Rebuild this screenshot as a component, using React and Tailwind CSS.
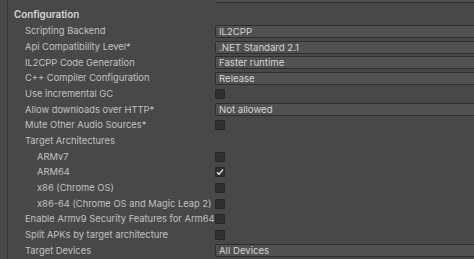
import React from 'react'

const rows = [
  { label: 'Scripting Backend', type: 'select', value: 'IL2CPP' },
  { label: 'Api Compatibility Level*', type: 'select', value: '.NET Standard 2.1' },
  { label: 'IL2CPP Code Generation', type: 'select', value: 'Faster runtime' },
  { label: 'C++ Compiler Configuration', type: 'select', value: 'Release' },
  { label: 'Use incremental GC', type: 'check', value: false },
  { label: 'Allow downloads over HTTP*', type: 'select', value: 'Not allowed' },
  { label: 'Mute Other Audio Sources*', type: 'check', value: false },
  { label: 'Target Architectures', type: 'none' },
  { label: 'ARMv7', type: 'check', value: false, sub: true },
  { label: 'ARM64', type: 'check', value: true, sub: true },
  { label: 'x86 (Chrome OS)', type: 'check', value: false, sub: true },
  { label: 'x86-64 (Chrome OS and Magic Leap 2)', type: 'check', value: false, sub: true },
  { label: 'Enable Armv9 Security Features for Arm64', type: 'check', value: false },
  { label: 'Split APKs by target architecture', type: 'check', value: false },
  { label: 'Target Devices', type: 'select', value: 'All Devices' }
]

function Field({ row }) {
  if (row.type === 'select') {
    return (
      <div className="flex-1 h-[13px] bg-[#515151] border border-[#2e2e2e] rounded-[2px] pl-[3px] flex items-center text-[#d4d4d4] -mr-4 leading-[11px] text-[9.6px]">
        {row.value}
      </div>
    )
  }
  if (row.type === 'check') {
    return (
      <div className="w-[10px] h-[10px] bg-[#303030] border border-[#262626] rounded-[1px] flex items-center justify-center">
        {row.value && (
          <svg width="8" height="8" viewBox="0 0 8 8">
            <path d="M1 4.2 L3 6.2 L7 1.5" fill="none" stroke="#e8e8e8" strokeWidth="1.3" />
          </svg>
        )}
      </div>
    )
  }
  return null
}

export default function App() {
  return (
    <div className="w-[474px] h-[259px] bg-[#484848] overflow-hidden flex text-[9.35px] font-['Inter',sans-serif]">
      <div className="w-[7px] shrink-0" />
      <div className="w-px shrink-0 bg-[#383838]" />
      <div className="flex-1 relative pt-[7.9px]">
        <div className="absolute top-0 left-[207px] right-0 h-[3px] bg-[#515151] border-b border-[#2e2e2e]" />
        <div className="flex flex-col">
          <div className="h-[15.67px] flex items-center pl-[6px] font-semibold text-[#d6d6d6] text-[9.8px]">
            Configuration
          </div>
          {rows.map((row, i) => (
            <div key={i} className="h-[15.67px] flex items-center">
              <div
                className={
                  'w-[207px] shrink-0 whitespace-nowrap text-[#c2c2c2] leading-[14px] ' +
                  (row.sub ? 'pl-[29px]' : 'pl-[17px]')
                }
              >
                {row.label}
              </div>
              <Field row={row} />
            </div>
          ))}
        </div>
      </div>
    </div>
  )
}
